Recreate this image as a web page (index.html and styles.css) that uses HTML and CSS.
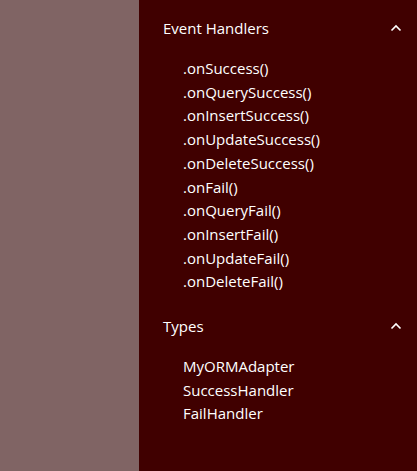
FILE: index.html
```html
<!DOCTYPE html>
<html>
<head>
<meta charset="utf-8">
<link rel="stylesheet" href="styles.css">
</head>
<body>
<div class="layout">
  <div class="backdrop"></div>
  <nav class="panel">
    <section class="group">
      <div class="group-head">
        <span class="group-title">Event Handlers</span>
        <svg class="chev" width="12" height="8" viewBox="0 0 12 8"><path d="M1.5 6.5 L6 2 L10.5 6.5" fill="none" stroke="#fff" stroke-width="1.6"/></svg>
      </div>
      <ul class="items">
        <li>.onSuccess()</li>
        <li>.onQuerySuccess()</li>
        <li>.onInsertSuccess()</li>
        <li>.onUpdateSuccess()</li>
        <li>.onDeleteSuccess()</li>
        <li>.onFail()</li>
        <li>.onQueryFail()</li>
        <li>.onInsertFail()</li>
        <li>.onUpdateFail()</li>
        <li>.onDeleteFail()</li>
      </ul>
    </section>
    <section class="group">
      <div class="group-head">
        <span class="group-title">Types</span>
        <svg class="chev" width="12" height="8" viewBox="0 0 12 8"><path d="M1.5 6.5 L6 2 L10.5 6.5" fill="none" stroke="#fff" stroke-width="1.6"/></svg>
      </div>
      <ul class="items">
        <li>MyORMAdapter</li>
        <li>SuccessHandler</li>
        <li>FailHandler</li>
      </ul>
    </section>
  </nav>
</div>
</body>
</html>
```
FILE: styles.css
```css
html, body { margin: 0; padding: 0; height: 100%; }
body { font-family: "Open Sans", "Noto Sans", sans-serif; color: #fff; }
.layout { display: flex; height: 471px; }
.backdrop { width: 139px; background: #806464; flex: none; }
.panel { flex: 1; background: #400000; padding: 16px 14px 0 24px; }
.group { margin-bottom: 20px; }
.group-head { display: flex; justify-content: space-between; align-items: center; height: 24px; font-size: 15px; }
.chev { margin-right: 1px; }
.items { list-style: none; margin: 0; padding: 17px 0 0 20px; font-size: 15px; line-height: 23.7px; }
```
